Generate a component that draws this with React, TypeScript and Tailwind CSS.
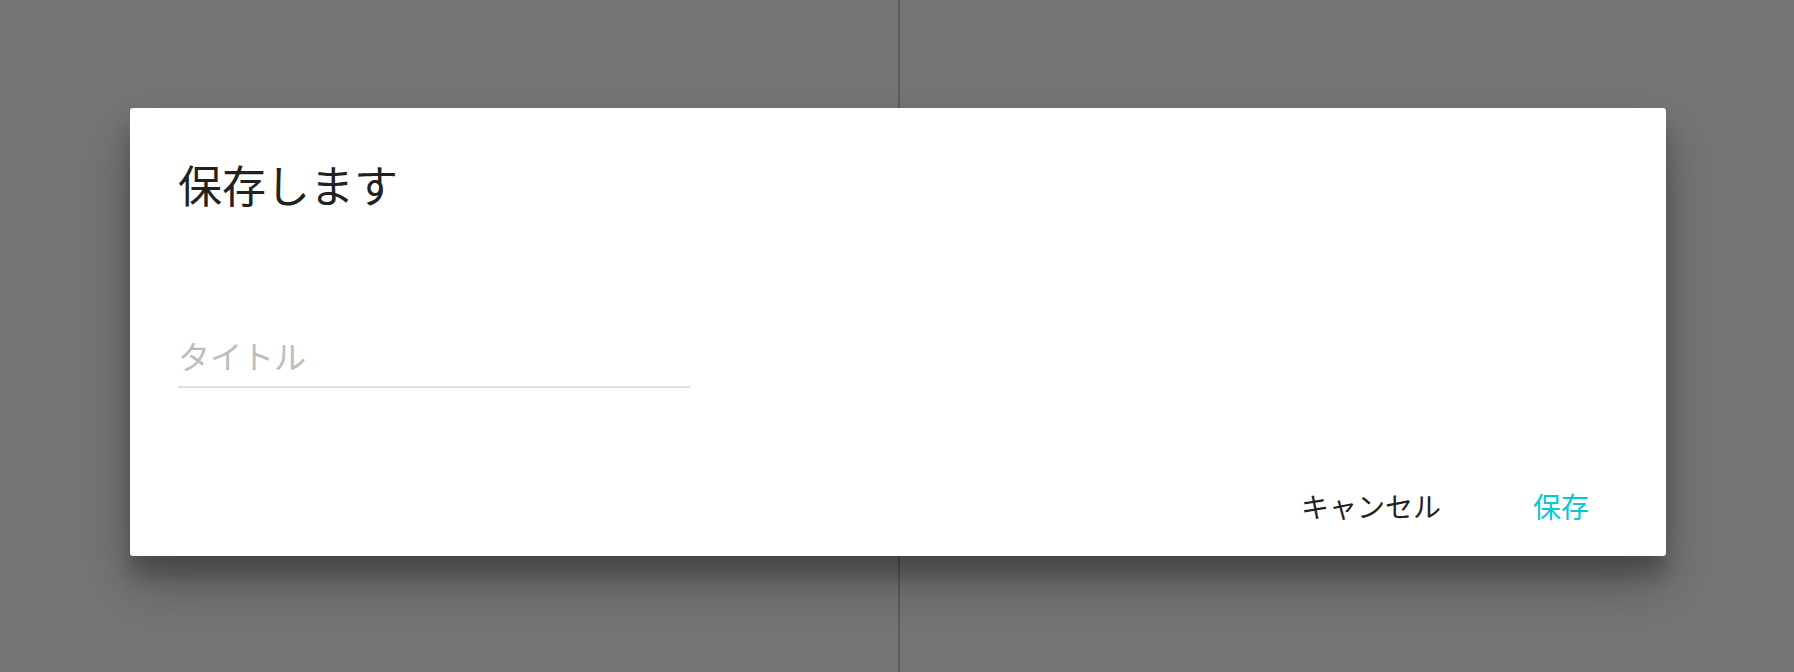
export default function App() {
  const font = { fontFamily: '"Noto Sans CJK JP", "Noto Sans", sans-serif' };

  return (
    <div className="relative h-[672px] w-[1794px] overflow-hidden bg-[#757575]" style={font}>
      {/* page behind the dim layer */}
      <div className="flex h-full w-full">
        <div className="h-full w-[900px] border-r-2 border-[#5c5c5c]" />
        <div className="h-full flex-1" />
      </div>

      {/* modal */}
      <div className="absolute left-[130px] top-[108px] flex h-[448px] w-[1536px] flex-col rounded-[3px] bg-white shadow-[0_28px_56px_rgba(0,0,0,0.25),0_20px_20px_rgba(0,0,0,0.22)]">
        <h2 className="pl-[48px] pt-[54px] text-[44px] leading-[44px] font-normal text-[#212121]">保存します</h2>

        <div className="ml-[48px] mt-[133px] w-[512px] border-b-2 border-[#e0e0e0] pb-[15px]">
          <input
            placeholder="タイトル"
            className="block h-[32px] w-full bg-transparent text-[32px] leading-[32px] text-[#212121] outline-none placeholder:text-[#bdbdbd]"
            style={font}
          />
        </div>

        <div className="mt-auto flex items-center justify-end gap-[92px] pb-[36px] pr-[77px]">
          <button className="text-[28px] leading-[28px] text-[#212121]" style={font}>キャンセル</button>
          <button className="text-[28px] leading-[28px] text-[#06c8d6]" style={font}>保存</button>
        </div>
      </div>
    </div>
  );
}
